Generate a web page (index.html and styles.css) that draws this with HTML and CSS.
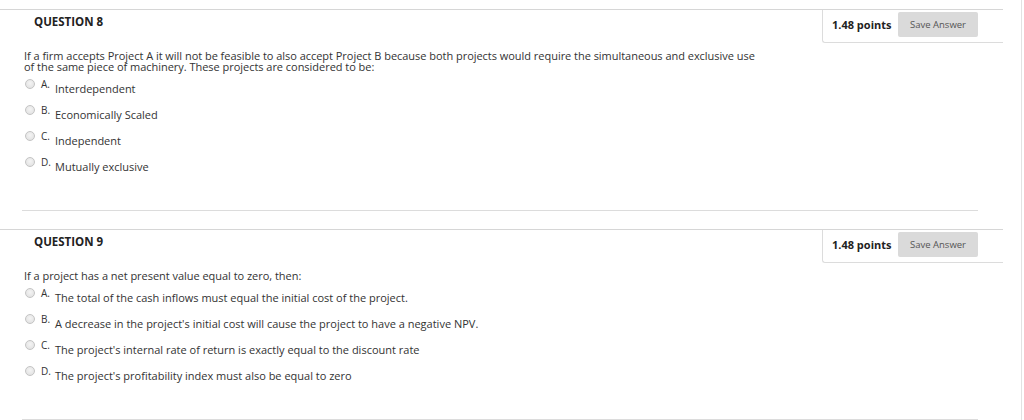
FILE: index.html
```html
<!DOCTYPE html>
<html>
<head>
<meta charset="utf-8">
<link rel="stylesheet" href="styles.css">
</head>
<body>
<div class="page">
  <div class="question">
    <div class="q-head">
      <h3 class="q-title">QUESTION 8</h3>
      <div class="points-box">
        <span class="points">1.48 points</span>
        <button class="save-btn">Save Answer</button>
      </div>
    </div>
    <div class="q-body">
      <p class="q-text">If a firm accepts Project A it will not be feasible to also accept Project B because both projects would require the simultaneous and exclusive use of the same piece of machinery. These projects are considered to be:</p>
      <ul class="options">
        <li class="option"><span class="radio"></span><span class="letter">A.</span><span class="answer">Interdependent</span></li>
        <li class="option"><span class="radio"></span><span class="letter">B.</span><span class="answer">Economically Scaled</span></li>
        <li class="option"><span class="radio"></span><span class="letter">C.</span><span class="answer">Independent</span></li>
        <li class="option"><span class="radio"></span><span class="letter">D.</span><span class="answer">Mutually exclusive</span></li>
      </ul>
    </div>
    <div class="q-sep"></div>
  </div>
  <div class="question">
    <div class="q-head">
      <h3 class="q-title">QUESTION 9</h3>
      <div class="points-box">
        <span class="points">1.48 points</span>
        <button class="save-btn">Save Answer</button>
      </div>
    </div>
    <div class="q-body">
      <p class="q-text">If a project has a net present value equal to zero, then:</p>
      <ul class="options">
        <li class="option"><span class="radio"></span><span class="letter">A.</span><span class="answer">The total of the cash inflows must equal the initial cost of the project.</span></li>
        <li class="option"><span class="radio"></span><span class="letter">B.</span><span class="answer">A decrease in the project's initial cost will cause the project to have a negative NPV.</span></li>
        <li class="option"><span class="radio"></span><span class="letter">C.</span><span class="answer">The project's internal rate of return is exactly equal to the discount rate</span></li>
        <li class="option"><span class="radio"></span><span class="letter">D.</span><span class="answer">The project's profitability index must also be equal to zero</span></li>
      </ul>
    </div>
    <div class="q-sep"></div>
  </div>
</div>
</body>
</html>
```
FILE: styles.css
```css
html, body {
  margin: 0;
  padding: 0;
  background: #fff;
}
body {
  font-family: "Open Sans", "Liberation Sans", sans-serif;
  color: #333;
  overflow: hidden;
}
.page {
  width: 1022px;
  min-height: 420px;
  box-sizing: border-box;
  border-right: 1px solid #e2e2e2;
  padding-top: 9px;
}
.question {
  width: 1003px;
  border-top: 1px solid #d6d6d6;
}
.q-head {
  display: flex;
  justify-content: space-between;
  align-items: flex-start;
}
.q-title {
  margin: 5px 0 0 34px;
  font-size: 11.5px;
  line-height: 14px;
  font-weight: 700;
  color: #222;
}
.points-box {
  width: 181px;
  height: 33px;
  box-sizing: border-box;
  border-left: 1px solid #dcdcdc;
  border-bottom: 1px solid #dcdcdc;
  border-bottom-left-radius: 3px;
  display: flex;
  align-items: flex-start;
  padding: 2px 0 0 9px;
}
.points {
  width: 66px;
  font-size: 11px;
  line-height: 25px;
  font-weight: 700;
  color: #222;
}
.save-btn {
  width: 80px;
  height: 25px;
  border: none;
  border-radius: 2px;
  background: #dadada;
  color: #555;
  font-family: "Open Sans", "Liberation Sans", sans-serif;
  font-size: 9.5px;
  padding: 0;
}
.q-body {
  padding: 7px 0 0 24px;
}
.q-text {
  margin: 0;
  max-width: 736px;
  font-size: 11px;
  line-height: 11px;
  letter-spacing: -0.03px;
  color: #333;
}
.options {
  list-style: none;
  margin: 7px 0 0;
  padding: 0;
}
.option {
  display: flex;
  align-items: flex-start;
  height: 16px;
  margin-bottom: 10px;
}
.radio {
  width: 10px;
  height: 10px;
  box-sizing: border-box;
  margin-left: 1px;
  border: 1px solid #c4c4c4;
  border-radius: 50%;
  background: radial-gradient(circle at 50% 40%, #f4f4f4 0%, #dedede 100%);
}
.letter {
  width: 14px;
  margin-left: 6px;
  font-size: 10px;
  line-height: 10px;
  color: #333;
}
.answer {
  margin-top: 4px;
  font-size: 11px;
  line-height: 12px;
  color: #333;
}
.q-sep {
  width: 956px;
  margin: 37px 0 18px 22px;
  border-top: 1px solid #dcdcdc;
}
```
